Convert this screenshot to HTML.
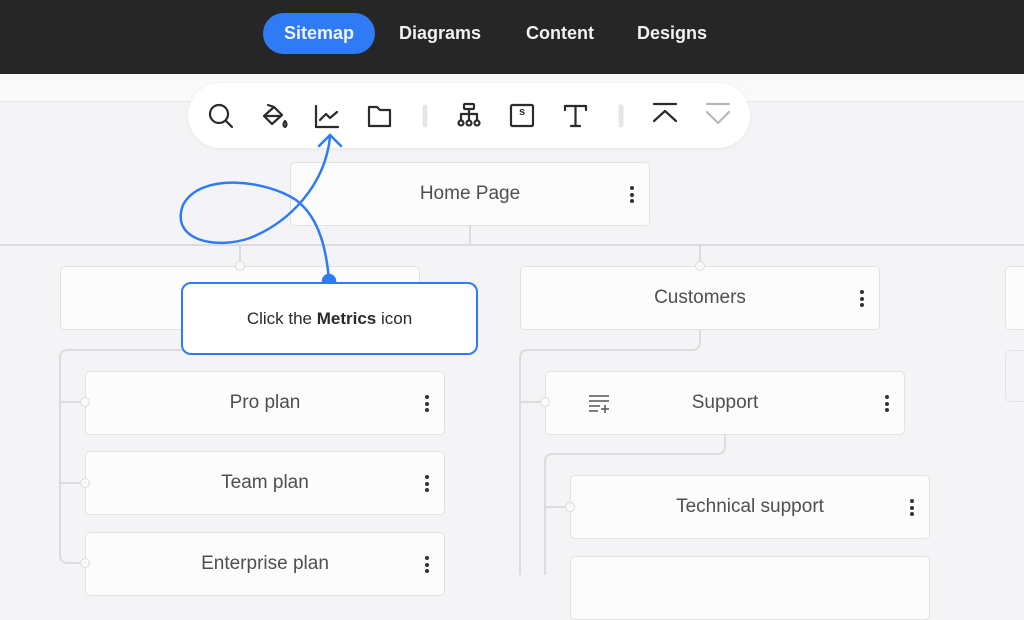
<!DOCTYPE html>
<html><head><meta charset="utf-8"><style>
*{margin:0;padding:0;box-sizing:border-box}
body{width:1024px;height:575px;overflow:hidden;background:#f4f4f6;font-family:"Liberation Sans",sans-serif;position:relative}
.hdr{position:absolute;left:0;top:0;width:1024px;height:74px;background:#262626}
.nav{position:absolute;top:23px;color:#f2f2f2;font-size:18px;font-weight:bold;transform:translateX(-50%)}
.pill{position:absolute;left:263px;top:13px;width:112px;height:41px;border-radius:21px;background:#2f7bf5}
.sub{position:absolute;left:0;top:74px;width:1024px;height:28px;background:#f9f9fa;border-bottom:1px solid #e6e6e8}
.tb{position:absolute;left:188px;top:83px;width:562px;height:65px;border-radius:33px;background:#fff;box-shadow:0 1px 4px rgba(0,0,0,.06)}
.box{position:absolute;height:64px;width:360px;background:#fcfcfd;border:1.5px solid #e2e2e5;border-radius:5px;color:#4f4f4f;font-size:19px;text-align:center;line-height:61px}
.dots{position:absolute;right:15px;top:23px;width:4px;height:17px}
.dots i{display:block;width:4px;height:4px;border-radius:2px;background:#333;margin-bottom:2.5px}
.cir{position:absolute;width:10px;height:10px;border-radius:5px;background:#f9f9fa;border:1.5px solid #dcdcde}
</style></head><body>
<div class="hdr"></div>
<div class="pill"></div>
<div class="nav" style="left:319px">Sitemap</div>
<div class="nav" style="left:440px">Diagrams</div>
<div class="nav" style="left:560px">Content</div>
<div class="nav" style="left:672px">Designs</div>
<div class="sub"></div>

<svg style="position:absolute;left:0;top:0" width="1024" height="575" fill="none" stroke="#dcdcde" stroke-width="2">
<path d="M0 245H1024M470 226V245M240 245V266M700 245V266"/>
<path d="M240 330V342Q240 350 232 350H68Q60 350 60 358V555Q60 563 68 563H85M60 402H85M60 483H85"/>
<path d="M700 330V342Q700 350 692 350H528Q520 350 520 358V575M520 402H545"/>
<path d="M725 435V446Q725 454 717 454H553Q545 454 545 462V575M545 507H570"/>
</svg>

<div class="tb"></div>
<svg style="position:absolute;left:188px;top:83px" width="562" height="65" fill="none" stroke="#2b2b2b" stroke-width="2.2" stroke-linecap="round" stroke-linejoin="round">
<circle cx="31" cy="31" r="9"/><path d="M38 38L44 44"/>
<path d="M86 24L76 33L84 41L94 32Z M77 33H93 M80 22L86 24 M97 38q3 4 0 6q-3-2 0-6"/>
<path d="M128 23V44H150 M132 37L138 31L142 35L149 29"/>
<path d="M181 24H189L192 27H202V43H181Z"/>
<rect x="276" y="21" width="10" height="5" rx="1"/><path d="M281 26V31M273 31H289M273 31V37M281 31V37M289 31V37"/><circle cx="273" cy="40" r="2.5"/><circle cx="281" cy="40" r="2.5"/><circle cx="289" cy="40" r="2.5"/>
<rect x="323" y="22" width="22" height="21" rx="1.5"/>
<path d="M377 23H398M387.5 23V43M383 43H392M377 23V27M398 23V27"/>
<path d="M466 21H488M466 38L477 28L488 38"/>
<path d="M519 21H541M519 29L530 40L541 29" stroke="#b8b8bc"/>
<path d="M237 24V42M433 24V42" stroke="#e6e6e8" stroke-width="5"/>
</svg>
<div style="position:absolute;left:511px;top:106px;width:22px;text-align:center;font-size:11px;font-weight:bold;color:#2b2b2b">s</div>

<div class="box" style="left:290px;top:162px">Home Page<div class="dots"><i></i><i></i><i></i></div></div>
<div class="box" style="left:60px;top:266px"></div>
<div class="box" style="left:520px;top:266px">Customers<div class="dots"><i></i><i></i><i></i></div></div>
<div class="box" style="left:1005px;top:266px"></div>
<div class="box" style="left:1005px;top:350px;height:52px;background:#f4f4f6"></div>
<div class="box" style="left:85px;top:371px">Pro plan<div class="dots"><i></i><i></i><i></i></div></div>
<div class="box" style="left:85px;top:451px">Team plan<div class="dots"><i></i><i></i><i></i></div></div>
<div class="box" style="left:85px;top:532px">Enterprise plan<div class="dots"><i></i><i></i><i></i></div></div>
<div class="box" style="left:545px;top:371px">Support<div class="dots"><i></i><i></i><i></i></div>
<svg style="position:absolute;left:42px;top:22px" width="24" height="20" fill="none" stroke="#555" stroke-width="1.5"><path d="M1 2H21M1 7H21M1 12H12M1 17H10M13 15H21M17 11V19"/></svg></div>
<div class="box" style="left:570px;top:475px">Technical support<div class="dots"><i></i><i></i><i></i></div></div>
<div class="box" style="left:570px;top:556px"></div>
<div class="cir" style="left:235px;top:261px"></div>
<div class="cir" style="left:695px;top:261px"></div>
<div class="cir" style="left:80px;top:397px"></div>
<div class="cir" style="left:80px;top:478px"></div>
<div class="cir" style="left:80px;top:558px"></div>
<div class="cir" style="left:540px;top:397px"></div>
<div class="cir" style="left:565px;top:502px"></div>

<svg style="position:absolute;left:0;top:0" width="1024" height="575" fill="none" stroke="#2f7bf5" stroke-width="2.5" stroke-linecap="round">
<path d="M329 281C326 242 316 215 296 200C266 180 200 172 183 205C170 240 215 250 250 238C290 222 325 185 330 137"/>
<path d="M319 146L330 135L341 146"/>
<circle cx="329" cy="281" r="6" fill="#2f7bf5"/>
</svg>
<div style="position:absolute;left:181px;top:282px;width:297px;height:73px;background:#fff;border:2.5px solid #2f7bf5;border-radius:10px;text-align:center;line-height:69px;font-size:17px;color:#2a2a2a">Click the <b>Metrics</b> icon</div>
</body></html>
